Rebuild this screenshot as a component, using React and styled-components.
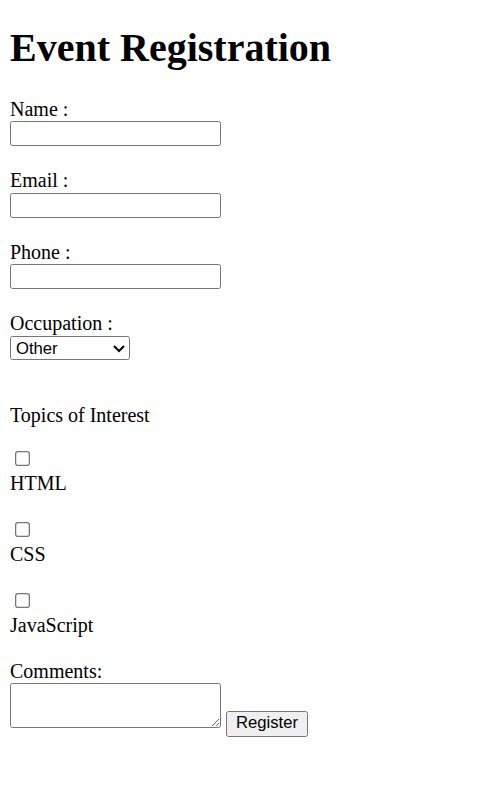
import React, { useState } from 'react';
import styled, { createGlobalStyle } from 'styled-components';

const GlobalStyle = createGlobalStyle`
  html {
    zoom: 1.25;
  }
  body {
    margin: 8px;
    background: #fff;
    color: #000;
    font-family: "Liberation Serif", "Times New Roman", serif;
    font-size: 16px;
  }
`;

const Title = styled.h1`
  font-size: 2em;
  font-weight: bold;
  margin: 11px 0 21.44px;
`;

const Form = styled.form`
  margin: 0;
`;

const FieldLabel = styled.label`
  font-size: 16px;
`;

const SectionTitle = styled.p`
  margin: 16px 0;
`;

const TextInput = styled.input`
  font-family: "Liberation Sans", Arial, sans-serif;
  font-size: 13.333px;
  width: 169px;
  height: 20px;
  box-sizing: border-box;
  padding: 1px 2px;
  border: 1px solid #767676;
  border-radius: 2px;
  margin: 0;
`;

const Select = styled.select`
  font-family: "Liberation Sans", Arial, sans-serif;
  font-size: 13.333px;
  width: 96px;
  height: 19px;
  box-sizing: border-box;
  border: 1px solid #767676;
  border-radius: 2px;
  background: #fff;
  color: #000;
  margin: 1px 0 1px;
`;

const Check = styled.input`
  margin: 3px 3px 3px 4px;
  width: 13px;
  height: 13px;
`;

const Comments = styled.textarea`
  font-family: "Liberation Mono", monospace;
  font-size: 13.333px;
  width: 169px;
  height: 36px;
  box-sizing: border-box;
  padding: 2px;
  border: 1px solid #767676;
  border-radius: 2px;
  margin: 0;
`;

const SubmitButton = styled.button`
  font-family: "Liberation Sans", Arial, sans-serif;
  font-size: 13.333px;
  padding: 1px 7px 2px;
  margin: 0 0 0 4px;
  border: 1px solid #767676;
  border-radius: 2px;
  background: #efefef;
  color: #000;
`;

const topics = ['HTML', 'CSS', 'JavaScript'];

const App = () => {
  const [form, setForm] = useState({ name: '', email: '', phone: '', occupation: 'Other', comments: '' });

  const handleChange = (e) => {
    const { name, value } = e.target;
    setForm((prev) => ({ ...prev, [name]: value }));
  };

  return (
    <>
      <GlobalStyle />
      <Title>Event Registration</Title>
      <Form onSubmit={(e) => e.preventDefault()}>
        <FieldLabel>Name :</FieldLabel><br />
        <TextInput type="text" name="name" value={form.name} onChange={handleChange} /><br /><br />
        <FieldLabel>Email :</FieldLabel><br />
        <TextInput type="email" name="email" value={form.email} onChange={handleChange} /><br /><br />
        <FieldLabel>Phone :</FieldLabel><br />
        <TextInput type="tel" name="phone" value={form.phone} onChange={handleChange} /><br /><br />
        <FieldLabel>Occupation :</FieldLabel><br />
        <Select name="occupation" value={form.occupation} onChange={handleChange}>
          <option>Student</option>
          <option>Professional</option>
          <option>Other</option>
        </Select><br /><br />
        <SectionTitle>Topics of Interest</SectionTitle>
        {topics.map((topic) => (
          <React.Fragment key={topic}>
            <Check type="checkbox" /><br />
            <FieldLabel>{topic}</FieldLabel><br /><br />
          </React.Fragment>
        ))}
        <FieldLabel>Comments:</FieldLabel><br />
        <Comments name="comments" value={form.comments} onChange={handleChange} />
        <SubmitButton type="submit">Register</SubmitButton>
      </Form>
    </>
  );
};

export default App;
